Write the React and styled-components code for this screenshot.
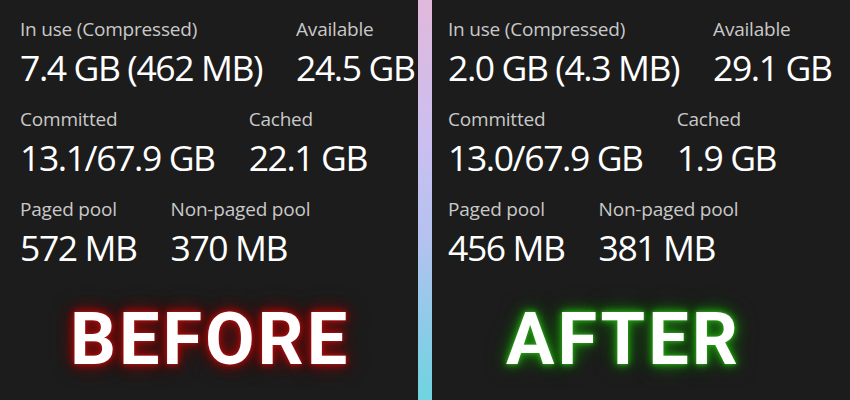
import React from 'react'
import styled, { createGlobalStyle } from 'styled-components'

const GlobalStyle = createGlobalStyle`
  html, body {
    margin: 0;
    padding: 0;
    background: #1c1c1c;
  }
`

const before = {
  stats: [
    [
      { label: 'In use (Compressed)', value: '7.4 GB (462 MB)' },
      { label: 'Available', value: '24.5 GB' },
    ],
    [
      { label: 'Committed', value: '13.1/67.9 GB' },
      { label: 'Cached', value: '22.1 GB' },
    ],
    [
      { label: 'Paged pool', value: '572 MB' },
      { label: 'Non-paged pool', value: '370 MB' },
    ],
  ],
}

const after = {
  stats: [
    [
      { label: 'In use (Compressed)', value: '2.0 GB (4.3 MB)' },
      { label: 'Available', value: '29.1 GB' },
    ],
    [
      { label: 'Committed', value: '13.0/67.9 GB' },
      { label: 'Cached', value: '1.9 GB' },
    ],
    [
      { label: 'Paged pool', value: '456 MB' },
      { label: 'Non-paged pool', value: '381 MB' },
    ],
  ],
}

const Panel = ({ data, title, glow, pad, titleIndent }) => (
  <PanelBox $pad={pad}>
    <Stats>
      {data.stats.map((row, i) => (
        <StatRow key={i}>
          {row.map((s) => (
            <Stat key={s.label}>
              <Label>{s.label}</Label>
              <Value>{s.value}</Value>
            </Stat>
          ))}
        </StatRow>
      ))}
    </Stats>
    <Title $glow={glow} $indent={titleIndent}>{title}</Title>
  </PanelBox>
)

export default function App() {
  return (
    <>
      <GlobalStyle />
      <Page>
        <Panel data={before} title="BEFORE" glow="red" pad={20} titleIndent={50} />
        <Divider />
        <Panel data={after} title="AFTER" glow="green" pad={16} titleIndent={58} />
      </Page>
    </>
  )
}

const Page = styled.div`
  width: 850px;
  height: 400px;
  display: grid;
  grid-template-columns: 418px 14px 418px;
  background: #1c1c1c;
  overflow: hidden;
`

const PanelBox = styled.div`
  display: flex;
  flex-direction: column;
  justify-content: space-between;
  padding: 17px 0 20px ${(p) => p.$pad}px;
  box-sizing: border-box;
  height: 400px;
  overflow: hidden;
`

const Stats = styled.div`
  display: flex;
  flex-direction: column;
  gap: 18px;
`

const StatRow = styled.div`
  display: flex;
  gap: 34px;
  white-space: nowrap;
`

const Stat = styled.div`
  display: flex;
  flex-direction: column;
  gap: 4px;
`

const Label = styled.div`
  font-family: 'Open Sans', 'Noto Sans', sans-serif;
  font-size: 19px;
  line-height: 24px;
  letter-spacing: -0.2px;
  color: #c9c9c9;
`

const Value = styled.div`
  font-family: 'Open Sans', 'Noto Sans', sans-serif;
  font-size: 35.5px;
  line-height: 44px;
  letter-spacing: -1.4px;
  color: #ffffff;
`

const glows = {
  red: '0 0 3px #a81212, 0 0 6px #9a1010, 0 0 10px #8a0c0c, 0 0 15px #7a0a0a, 0 0 22px #5a0808',
  green: '0 0 3px #2ea01a, 0 0 6px #269216, 0 0 10px #1f8212, 0 0 15px #186e0e, 0 0 22px #10500a',
}

const Title = styled.div`
  font-family: Roboto, 'Open Sans', sans-serif;
  font-weight: 700;
  font-size: 72px;
  line-height: 80px;
  letter-spacing: 3px;
  color: #ffffff;
  padding-left: ${(p) => p.$indent}px;
  text-shadow: ${(p) => glows[p.$glow]};
`

const Divider = styled.div`
  background: linear-gradient(180deg, #e0b9db 0%, #cbbff0 35%, #b4c2f0 60%, #8ccbe8 82%, #6fd4e0 100%);
`
